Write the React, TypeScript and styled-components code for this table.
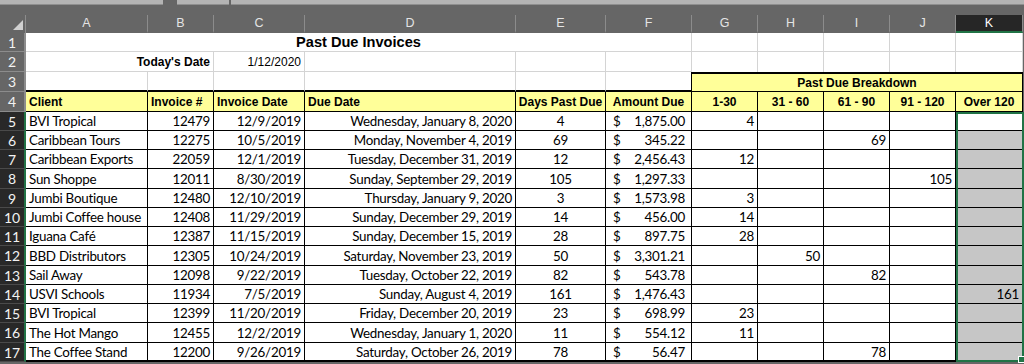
import React from "react";
import styled, { createGlobalStyle } from "styled-components";

const GlobalStyle = createGlobalStyle`
  html, body {
    margin: 0;
    padding: 0;
    background: #666666;
  }
  body {
    width: 1024px;
    height: 364px;
    overflow: hidden;
  }
`;

const GRID = "1px solid #d4d4d4";
const INK = "1px solid #000";
const THICK = "2px solid #000";
const NONE = "0 none";

const YELLOW = "#ffff99";
const SELECT = "#c6c6c6";
const GREEN = "#217346";

const WIDTHS = [26, 122, 66, 91, 211, 90, 86, 66, 66, 66, 66, 67];
const LETTERS = ["A", "B", "C", "D", "E", "F", "G", "H", "I", "J", "K"];
const HEIGHTS = [19, 20, 20, 20, 19, 19, 19, 20, 19, 19, 19, 20, 19, 19, 19, 20, 19];

const BUCKETS = [
  { label: "1-30", max: 30 },
  { label: "31 - 60", max: 60 },
  { label: "61 - 90", max: 90 },
  { label: "91 - 120", max: 120 },
  { label: "Over 120", max: Infinity },
];

const invoices = [
  { client: "BVI Tropical", no: 12479, date: "12/9/2019", due: "Wednesday, January 8, 2020", days: 4, amount: "1,875.00" },
  { client: "Caribbean Tours", no: 12275, date: "10/5/2019", due: "Monday, November 4, 2019", days: 69, amount: "345.22" },
  { client: "Caribbean Exports", no: 22059, date: "12/1/2019", due: "Tuesday, December 31, 2019", days: 12, amount: "2,456.43" },
  { client: "Sun Shoppe", no: 12011, date: "8/30/2019", due: "Sunday, September 29, 2019", days: 105, amount: "1,297.33" },
  { client: "Jumbi Boutique", no: 12480, date: "12/10/2019", due: "Thursday, January 9, 2020", days: 3, amount: "1,573.98" },
  { client: "Jumbi Coffee house", no: 12408, date: "11/29/2019", due: "Sunday, December 29, 2019", days: 14, amount: "456.00" },
  { client: "Iguana Café", no: 12387, date: "11/15/2019", due: "Sunday, December 15, 2019", days: 28, amount: "897.75" },
  { client: "BBD Distributors", no: 12305, date: "10/24/2019", due: "Saturday, November 23, 2019", days: 50, amount: "3,301.21" },
  { client: "Sail Away", no: 12098, date: "9/22/2019", due: "Tuesday, October 22, 2019", days: 82, amount: "543.78" },
  { client: "USVI Schools", no: 11934, date: "7/5/2019", due: "Sunday, August 4, 2019", days: 161, amount: "1,476.43" },
  { client: "BVI Tropical", no: 12399, date: "11/20/2019", due: "Friday, December 20, 2019", days: 23, amount: "698.99" },
  { client: "The Hot Mango", no: 12455, date: "12/2/2019", due: "Wednesday, January 1, 2020", days: 11, amount: "554.12" },
  { client: "The Coffee Stand", no: 12200, date: "9/26/2019", due: "Saturday, October 26, 2019", days: 78, amount: "56.47" },
];

const bucketOf = (days: number) => BUCKETS.findIndex((b) => days <= b.max);

type Face = "data" | "head" | "title" | "arial";

const FONTS: Record<Face, string> = {
  data: `400 13.4px "Lato", "Liberation Sans", sans-serif`,
  head: `700 12px "Liberation Sans", Arial, sans-serif`,
  title: `700 14.6px "Liberation Sans", Arial, sans-serif`,
  arial: `400 12px "Liberation Sans", Arial, sans-serif`,
};

const SPACING: Record<Face, string> = {
  data: "-0.25px",
  head: "0",
  title: "0",
  arial: "0",
};

const JUSTIFY = { left: "flex-start", right: "flex-end", center: "center" };

const TopStrip = styled.div`
  display: flex;
  gap: 2px;
  height: 5px;
  margin-bottom: 10px;
`;

const StripPiece = styled.div<{ $w?: number }>`
  flex: ${(p) => (p.$w ? `0 0 ${p.$w}px` : "1 1 auto")};
  background: #b4b4b4;
  border-bottom: 1px solid #8f8f8f;
  box-sizing: border-box;
`;

const StripGap = styled.div<{ $w: number }>`
  flex: 0 0 ${(p) => p.$w}px;
`;

const Sheet = styled.div`
  position: relative;
  display: grid;
  grid-template-columns: ${WIDTHS.map((w) => `${w}px`).join(" ")};
  grid-template-rows: 18px ${HEIGHTS.map((h) => `${h}px`).join(" ")};
`;

const Corner = styled.div`
  display: flex;
  justify-content: flex-end;
  align-items: flex-end;
  padding: 0 2px 3px 0;
  border-right: 1px solid #8c8c8c;
  box-sizing: border-box;
`;

const Triangle = styled.div`
  width: 0;
  height: 0;
  border-left: 10px solid transparent;
  border-bottom: 10px solid #d0d0d0;
`;

const ColHead = styled.div<{ $active?: boolean }>`
  display: flex;
  justify-content: center;
  align-items: center;
  box-sizing: border-box;
  background: ${(p) => (p.$active ? "#262626" : "transparent")};
  border-right: 1px solid #8c8c8c;
  border-bottom: 2px solid ${(p) => (p.$active ? GREEN : "transparent")};
  color: ${(p) => (p.$active ? "#ffffff" : "#e4e4e4")};
  font: 400 12.5px "Liberation Sans", Arial, sans-serif;
`;

const RowHead = styled.div<{ $active?: boolean }>`
  display: flex;
  justify-content: center;
  align-items: center;
  box-sizing: border-box;
  background: ${(p) => (p.$active ? "#282828" : "#666666")};
  border-bottom: 1px solid ${(p) => (p.$active ? "#4a4a4a" : "#8c8c8c")};
  border-right: 2px solid ${(p) => (p.$active ? GREEN : "#8c8c8c")};
  color: #f2f2f2;
  font: 400 14px "Lato", "Liberation Sans", sans-serif;
`;

const Cell = styled.div<{
  $align?: "left" | "right" | "center";
  $face?: Face;
  $fill?: string;
  $span?: number;
  $r?: string;
  $b?: string;
  $t?: string;
}>`
  display: flex;
  align-items: center;
  justify-content: ${(p) => JUSTIFY[p.$align ?? "left"]};
  grid-column: span ${(p) => p.$span ?? 1};
  box-sizing: border-box;
  min-width: 0;
  padding: 0 3px;
  overflow: hidden;
  white-space: nowrap;
  background: ${(p) => p.$fill ?? "#ffffff"};
  color: #000;
  font: ${(p) => FONTS[p.$face ?? "data"]};
  letter-spacing: ${(p) => SPACING[p.$face ?? "data"]};
  border-right: ${(p) => p.$r ?? GRID};
  border-bottom: ${(p) => p.$b ?? GRID};
  border-top: ${(p) => p.$t ?? NONE};
`;

const Money = styled(Cell)`
  justify-content: space-between;
  padding: 0 6px 0 7px;
`;

const Selection = styled.div`
  position: absolute;
  inset: 0;
  grid-column: 12;
  grid-row: 6 / 19;
  border: 2px solid ${GREEN};
  pointer-events: none;
`;

const FillHandle = styled.div`
  position: absolute;
  right: -3px;
  bottom: -3px;
  width: 5px;
  height: 5px;
  background: ${GREEN};
  border: 1px solid #ffffff;
`;

export default function App() {
  const last = invoices.length - 1;
  return (
    <>
      <GlobalStyle />
      <TopStrip>
        <StripPiece $w={163} />
        <StripGap $w={10} />
        <StripPiece $w={52} />
        <StripPiece />
      </TopStrip>
      <Sheet>
        <Corner>
          <Triangle />
        </Corner>
        {LETTERS.map((l) => (
          <ColHead key={l} $active={l === "K"}>
            {l}
          </ColHead>
        ))}

        {/* row 1 */}
        <RowHead>1</RowHead>
        <Cell $span={6} $align="center" $face="title">
          Past Due Invoices
        </Cell>
        {BUCKETS.map((b) => (
          <Cell key={b.label} />
        ))}

        {/* row 2 */}
        <RowHead>2</RowHead>
        <Cell $span={2} $align="right" $face="head">
          Today's Date
        </Cell>
        <Cell $align="right" $face="arial">
          1/12/2020
        </Cell>
        <Cell />
        <Cell />
        <Cell />
        {BUCKETS.map((b) => (
          <Cell key={b.label} $b={NONE} />
        ))}

        {/* row 3 */}
        <RowHead>3</RowHead>
        <Cell $b={THICK} />
        <Cell $b={THICK} />
        <Cell $b={THICK} />
        <Cell $b={THICK} />
        <Cell $b={THICK} />
        <Cell $b={THICK} $r={INK} />
        <Cell $span={5} $align="center" $face="head" $fill={YELLOW} $t={THICK} $r={INK} $b={INK}>
          Past Due Breakdown
        </Cell>

        {/* row 4 */}
        <RowHead>4</RowHead>
        <Cell $face="head" $fill={YELLOW} $r={INK} $b={INK}>
          Client
        </Cell>
        <Cell $face="head" $fill={YELLOW} $r={INK} $b={INK}>
          Invoice #
        </Cell>
        <Cell $face="head" $fill={YELLOW} $r={INK} $b={INK}>
          Invoice Date
        </Cell>
        <Cell $face="head" $fill={YELLOW} $r={INK} $b={INK}>
          Due Date
        </Cell>
        <Cell $face="head" $align="center" $fill={YELLOW} $r={INK} $b={INK}>
          Days Past Due
        </Cell>
        <Cell $face="head" $align="center" $fill={YELLOW} $r={INK} $b={INK}>
          Amount Due
        </Cell>
        {BUCKETS.map((b) => (
          <Cell key={b.label} $face="head" $align="center" $fill={YELLOW} $r={INK} $b={INK}>
            {b.label}
          </Cell>
        ))}

        {invoices.map((inv, i) => {
          const b = i === last ? THICK : INK;
          const bucket = bucketOf(inv.days);
          return (
            <React.Fragment key={inv.no}>
              <RowHead $active>{i + 5}</RowHead>
              <Cell $r={INK} $b={b}>{inv.client}</Cell>
              <Cell $align="right" $r={INK} $b={b}>{inv.no}</Cell>
              <Cell $align="right" $r={INK} $b={b}>{inv.date}</Cell>
              <Cell $align="right" $r={INK} $b={b}>{inv.due}</Cell>
              <Cell $align="center" $r={INK} $b={b}>{inv.days}</Cell>
              <Money $r={INK} $b={b}>
                <span>$</span>
                <span>{inv.amount}</span>
              </Money>
              {BUCKETS.map((bk, j) => (
                <Cell
                  key={bk.label}
                  $align="right"
                  $r={INK}
                  $b={b}
                  $fill={j === 4 && i > 0 ? SELECT : undefined}
                >
                  {bucket === j ? inv.days : ""}
                </Cell>
              ))}
            </React.Fragment>
          );
        })}

        <Selection>
          <FillHandle />
        </Selection>
      </Sheet>
    </>
  );
}
